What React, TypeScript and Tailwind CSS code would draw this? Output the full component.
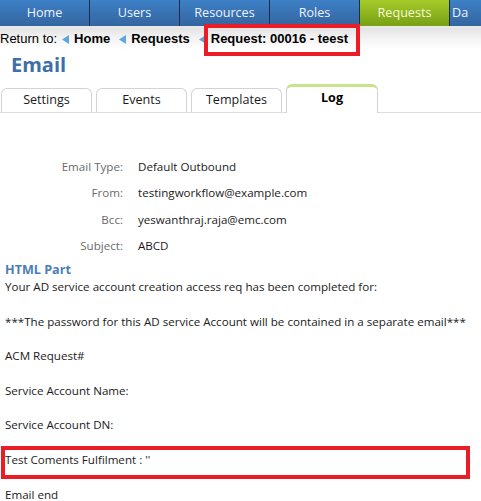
import React from "react";

const navItems = ["Home", "Users", "Resources", "Roles", "Requests", "Da"];

function Arrow() {
  return (
    <svg width="7" height="9" viewBox="0 0 7 9" className="mx-[5px] inline-block">
      <polygon points="0,4.5 7,0 7,9" fill="#5fa6dc" />
    </svg>
  );
}

export default function App() {
  const seg = { fontFamily: '"Open Sans", "Noto Sans", sans-serif' };
  return (
    <div className="w-[481px] h-[501px] bg-white overflow-hidden relative" style={seg}>
      {/* Nav */}
      <div className="flex h-[26px] bg-[#1d2f47]">
        {navItems.map((n, i) => (
          <div
            key={n}
            className={
              (i === 4
                ? "bg-gradient-to-b from-[#a5cb2a] to-[#78a013] text-[#f6f8d8] "
                : "bg-gradient-to-b from-[#3d80c6] to-[#3465a0] text-[#eef3fa] ") +
              (i === 5 ? "w-[40px] pl-[2px] " : "w-[89px] mr-[1px] justify-center ") +
              "flex items-center text-[12.6px] shrink-0 pt-[1px]"
            }
          >
            {n}
          </div>
        ))}
      </div>
      {/* Breadcrumb */}
      <div
        className="h-[24px] flex items-center bg-gradient-to-b from-[#e4e4e4] via-[#f4f4f4] to-white text-[13px] text-black border-t-[2px] border-[#e8e8e8]"
        style={{ fontFamily: '"Liberation Sans", Arial, sans-serif' }}
      >
        <span>Return to:</span>
        <Arrow />
        <span className="font-bold">Home</span>
        <span className="ml-[4px]" />
        <Arrow />
        <span className="font-bold">Requests</span>
        <span className="ml-[4px]" />
        <Arrow />
        <span className="font-bold relative">
          Request: 00016 - teest
          <span className="absolute left-[-7px] top-[-5px] w-[156px] h-[32px] border-[4px] border-[#ea1c26]" />
        </span>
      </div>
      {/* Title */}
      <div className="pl-[11px] pt-[1px] text-[20px] font-bold text-[#3e6fa5] leading-[28px]">Email</div>
      {/* Tabs */}
      <div className="mt-[4px] flex items-end h-[30px] border-b border-[#dedede] pl-[1px]">
        {["Settings", "Events", "Templates"].map((t) => (
          <div
            key={t}
            className="w-[91px] h-[24px] mr-[4px] border border-b-0 border-[#d3d3d3] rounded-t-[6px] flex items-center justify-center text-[12.6px] text-[#1b1b1b]"
          >
            {t}
          </div>
        ))}
        <div className="w-[92px] h-[29px] border border-b-0 border-[#d3d3d3] border-t-[3px] border-t-[#c9e38a] rounded-t-[6px] flex items-center justify-center text-[12.6px] font-bold text-black mb-[-1px] bg-white pb-[3px]">
          Log
        </div>
      </div>
      {/* Fields */}
      <div className="mt-[40px] text-[11.6px]">
        {[
          ["Email Type:", "Default Outbound"],
          ["From:", "testingworkflow@example.com"],
          ["Bcc:", "yeswanthraj.raja@emc.com"],
          ["Subject:", "ABCD"],
        ].map(([l, v]) => (
          <div key={l} className="flex h-[26.5px] items-center">
            <div className="w-[123px] text-right text-[#6b6b6b]">{l}</div>
            <div className="ml-[15px] text-[#1b1b1b]">{v}</div>
          </div>
        ))}
      </div>
      <div className="pl-[5px] text-[12.6px] font-bold text-[#4a7dba] leading-[17px] mt-[2px]">HTML Part</div>
      <div className="pl-[5px] text-[11.6px] leading-[17.3px] text-[#1b1b1b] whitespace-nowrap">
        <div>Your AD service account creation access req has been completed for:</div>
        <div>&nbsp;</div>
        <div>***The password for this AD service Account will be contained in a separate email***</div>
        <div>&nbsp;</div>
        <div>ACM Request#</div>
        <div>&nbsp;</div>
        <div>Service Account Name:</div>
        <div>&nbsp;</div>
        <div>Service Account DN:</div>
        <div>&nbsp;</div>
        <div className="relative">
          Test Coments Fulfilment : ''
          <span className="absolute left-[-4px] top-[-5px] w-[469px] h-[33px] border-[4px] border-[#ea1c26]" />
        </div>
        <div>&nbsp;</div>
        <div>Email end</div>
      </div>
    </div>
  );
}
